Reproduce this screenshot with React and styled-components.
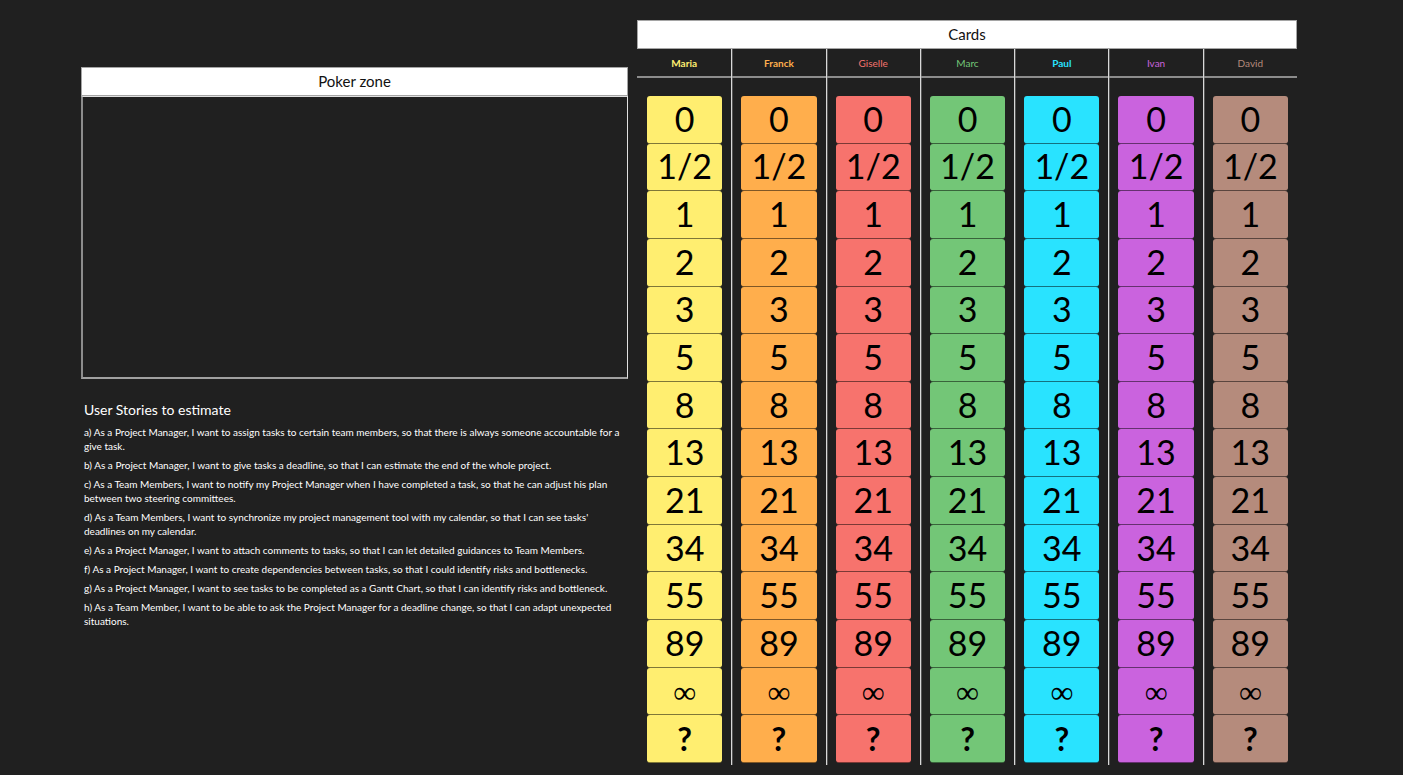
import React from "react";
import styled, { createGlobalStyle } from "styled-components";

const GlobalStyle = createGlobalStyle`
  * {
    box-sizing: border-box;
  }

  body {
    margin: 0;
    background-color: #202020;
    color: #ffffff;
    font-family: Lato, "Liberation Sans", sans-serif;
  }
`;

const Board = styled.main`
  display: grid;
  grid-template-columns: 547fr 660fr;
  gap: 9px;
  min-height: 100vh;
  padding: 20px 106px 10px 81px;
`;

const LeftPane = styled.div`
  padding-top: 47px;
`;

const Heading = styled.h2`
  margin: 0;
  height: 29px;
  border: 1px solid #a5a5a5;
  background-color: #ffffff;
  color: #111111;
  font-size: 15px;
  font-weight: 400;
  line-height: 27px;
  text-align: center;
`;

const Zone = styled.section`
  margin-bottom: 23px;
`;

const DropArea = styled.div`
  height: 283px;
  border: 1px solid #e0e0e0;
  border-left: 2px solid #8c8c8c;
  border-bottom: 2px solid #a0a0a0;
`;

const Stories = styled.section`
  padding: 0 3px;
`;

const StoriesTitle = styled.h3`
  margin: 0 0 8px;
  font-size: 14px;
  font-weight: 400;
  line-height: 15px;
`;

const Story = styled.p`
  margin: 0 0 5px;
  font-size: 10px;
  line-height: 14px;
`;

const Cards = styled.section`
  display: flex;
  flex-direction: column;
`;

const Columns = styled.div`
  flex: 1;
  display: grid;
  grid-template-columns: repeat(7, 1fr);
`;

const Player = styled.div`
  display: flex;
  flex-direction: column;
  border-left: ${(props) => (props.$first ? "none" : "1px solid #d8d8d8")};
  box-shadow: ${(props) => (props.$first ? "none" : "inset 1px 0 0 #555555")};
`;

const PlayerName = styled.h4`
  margin: 0;
  height: 29px;
  border-bottom: 2px solid #8c8c8c;
  color: ${(props) => props.$color};
  font-size: 10px;
  font-weight: ${(props) => (props.$bold ? 700 : 400)};
  line-height: 28px;
  text-align: center;
`;

const Deck = styled.div`
  flex: 1;
  display: grid;
  grid-auto-rows: 1fr;
  padding: 18px 9px 2px ${(props) => (props.$first ? "10px" : "9px")};
`;

const Card = styled.button`
  min-height: 40px;
  padding: 0 0 1px;
  border: 0;
  border-bottom: 1px solid rgba(0, 0, 0, 0.5);
  border-radius: 3px;
  background-color: ${(props) => props.$color};
  color: #000000;
  font-family: inherit;
  font-size: 34px;
  line-height: 40px;
  cursor: pointer;
`;

const Infinity = styled.span`
  font-family: "Liberation Serif", serif;
  font-size: 32px;
`;

const Unsure = styled.span`
  font-size: 32px;
  font-weight: 700;
`;

const players = [
  { name: "Maria", color: "#ffee70", bold: true },
  { name: "Franck", color: "#ffae4c", bold: true },
  { name: "Giselle", color: "#f7736d" },
  { name: "Marc", color: "#73c677" },
  { name: "Paul", color: "#29e3ff", bold: true },
  { name: "Ivan", color: "#ca63de" },
  { name: "David", color: "#b58b7c" },
];

const values = ["0", "1/2", "1", "2", "3", "5", "8", "13", "21", "34", "55", "89", "∞", "?"];

const stories = [
  "a) As a Project Manager, I want to assign tasks to certain team members, so that there is always someone accountable for a give task.",
  "b) As a Project Manager, I want to give tasks a deadline, so that I can estimate the end of the whole project.",
  "c) As a Team Members, I want to notify my Project Manager when I have completed a task, so that he can adjust his plan between two steering committees.",
  "d) As a Team Members, I want to synchronize my project management tool with my calendar, so that I can see tasks' deadlines on my calendar.",
  "e) As a Project Manager, I want to attach comments to tasks, so that I can let detailed guidances to Team Members.",
  "f) As a Project Manager, I want to create dependencies between tasks, so that I could identify risks and bottlenecks.",
  "g) As a Project Manager, I want to see tasks to be completed as a Gantt Chart, so that I can identify risks and bottleneck.",
  "h) As a Team Member, I want to be able to ask the Project Manager for a deadline change, so that I can adapt unexpected situations.",
];

const renderValue = (value) => {
  if (value === "∞") return <Infinity>{value}</Infinity>;
  if (value === "?") return <Unsure>{value}</Unsure>;
  return value;
};

const App = () => {
  return (
    <>
      <GlobalStyle />
      <Board>
        <LeftPane>
          <Zone>
            <Heading>Poker zone</Heading>
            <DropArea />
          </Zone>
          <Stories>
            <StoriesTitle>User Stories to estimate</StoriesTitle>
            {stories.map((story) => (
              <Story key={story}>{story}</Story>
            ))}
          </Stories>
        </LeftPane>
        <Cards>
          <Heading>Cards</Heading>
          <Columns>
            {players.map((player, index) => (
              <Player key={player.name} $first={index === 0}>
                <PlayerName $color={player.color} $bold={player.bold}>
                  {player.name}
                </PlayerName>
                <Deck $first={index === 0}>
                  {values.map((value) => (
                    <Card key={value} type="button" $color={player.color}>
                      {renderValue(value)}
                    </Card>
                  ))}
                </Deck>
              </Player>
            ))}
          </Columns>
        </Cards>
      </Board>
    </>
  );
};

export default App;
